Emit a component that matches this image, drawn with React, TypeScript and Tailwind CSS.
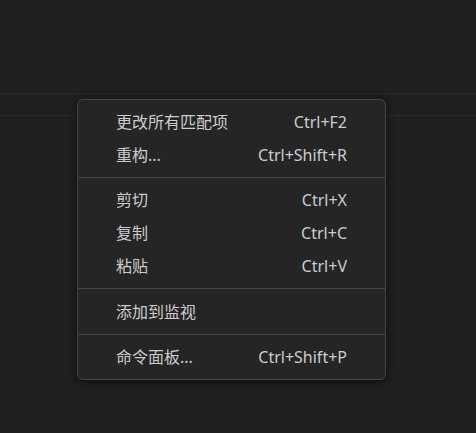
const font = { fontFamily: '"Noto Sans", "Noto Sans CJK SC", sans-serif' };

type Entry = { label: string; shortcut?: string } | 'sep';

const entries: Entry[] = [
  { label: '更改所有匹配项', shortcut: 'Ctrl+F2' },
  { label: '重构...', shortcut: 'Ctrl+Shift+R' },
  'sep',
  { label: '剪切', shortcut: 'Ctrl+X' },
  { label: '复制', shortcut: 'Ctrl+C' },
  { label: '粘贴', shortcut: 'Ctrl+V' },
  'sep',
  { label: '添加到监视' },
  'sep',
  { label: '命令面板...', shortcut: 'Ctrl+Shift+P' },
];

export default function App() {
  return (
    <div
      className="relative w-[476px] h-[433px] bg-[#1f1f1f] overflow-hidden"
      style={font}
    >
      {/* editor line highlight */}
      <div className="h-[93px]" />
      <div className="h-[23px] border-y border-[#282828]" />

      {/* context menu */}
      <div className="absolute left-[77px] top-[99px] w-[309px] h-[281px] rounded-[6px] border border-[#454545] bg-[#252526] pt-[5px] shadow-[0_2px_8px_rgba(0,0,0,0.6)]">
        {entries.map((e, i) =>
          e === 'sep' ? (
            <div key={i} className="h-[12.5px] flex items-center">
              <div className="h-px w-full bg-[#454545]" />
            </div>
          ) : (
            <div
              key={i}
              className="h-[33px] flex items-center justify-between pl-[38px] pr-[38px] text-[16px] text-[#cccccc]"
            >
              <span>{e.label}</span>
              {e.shortcut && <span>{e.shortcut}</span>}
            </div>
          )
        )}
      </div>
    </div>
  );
}
